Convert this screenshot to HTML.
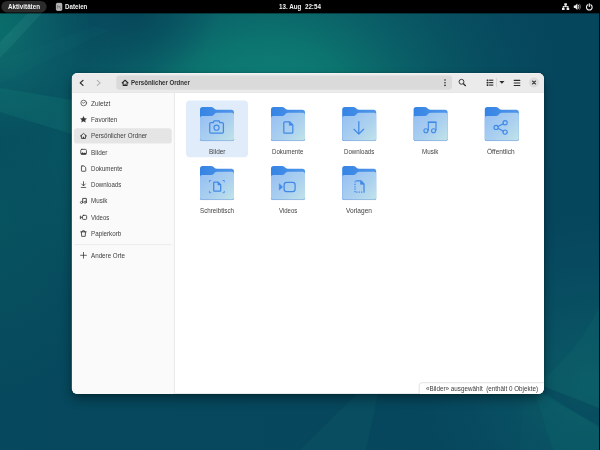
<!DOCTYPE html>
<html><head><meta charset="utf-8">
<style>
*{box-sizing:border-box;margin:0;padding:0}
html,body{width:600px;height:450px;overflow:hidden}
body{font-family:"Liberation Sans","DejaVu Sans",sans-serif;position:relative;background:#06475d;color:#333}
#gfx{position:absolute;left:0;top:0;width:600px;height:450px}
#txt{position:absolute;left:0;top:0;width:600px;height:450px;will-change:transform}
#txt span{position:absolute;white-space:nowrap;font-size:6.6px;line-height:7px;color:#424242;transform-origin:0 0}
#txt span.s{color:#404040}
#txt span.pb{font-weight:bold;color:#303030}
#txt span.st{color:#3a3a3a}
#txt span.tb{font-weight:bold;color:#f2f2f2}
</style></head><body>
<svg id="gfx" width="600" height="450" viewBox="0 0 600 450">
<defs>
<radialGradient id="g1" cx="0" cy="0" r="1" gradientUnits="userSpaceOnUse" gradientTransform="translate(270 115) scale(290 250)"><stop offset="0" stop-color="#10837a"/><stop offset="0.3" stop-color="#0d7971" stop-opacity=".9"/><stop offset="0.65" stop-color="#0b6269" stop-opacity=".5"/><stop offset="1" stop-color="#085563" stop-opacity="0"/></radialGradient>
<radialGradient id="g2" cx="0" cy="0" r="1" gradientUnits="userSpaceOnUse" gradientTransform="translate(0 30) scale(90 110)"><stop offset="0" stop-color="#10756f" stop-opacity=".9"/><stop offset="1" stop-color="#0d6c6e" stop-opacity="0"/></radialGradient>
<radialGradient id="g3" cx="590" cy="385" r="170" gradientUnits="userSpaceOnUse"><stop offset="0" stop-color="#0c6069" stop-opacity=".8"/><stop offset="1" stop-color="#0a5566" stop-opacity="0"/></radialGradient>
<radialGradient id="g4" cx="0" cy="0" r="1" gradientUnits="userSpaceOnUse" gradientTransform="translate(135 10) scale(85 70)"><stop offset="0" stop-color="#064459" stop-opacity=".85"/><stop offset="1" stop-color="#064459" stop-opacity="0"/></radialGradient>
<radialGradient id="g5" cx="0" cy="0" r="1" gradientUnits="userSpaceOnUse" gradientTransform="translate(0 215) scale(130 190)"><stop offset="0" stop-color="#085a61" stop-opacity=".6"/><stop offset="1" stop-color="#085a61" stop-opacity="0"/></radialGradient>
<linearGradient id="g0" x1="0" y1="0" x2="1" y2="0"><stop offset="0" stop-color="#06485d"/><stop offset="0.6" stop-color="#06475d"/><stop offset="1" stop-color="#06465d"/></linearGradient>
<linearGradient id="fb" x1="0" y1="0" x2="1" y2="0"><stop offset="0" stop-color="#3584e4"/><stop offset="1" stop-color="#5096ea"/></linearGradient>
<linearGradient id="ff" x1="0" y1="0.1" x2="1" y2="1"><stop offset="0" stop-color="#97c0f3"/><stop offset="0.55" stop-color="#abd0ef"/><stop offset="1" stop-color="#c1e4e8"/></linearGradient>
<filter id="sh" x="-20%" y="-20%" width="140%" height="150%"><feGaussianBlur stdDeviation="5.5"/></filter>
<filter id="sh2" x="-20%" y="-20%" width="140%" height="150%"><feGaussianBlur stdDeviation="1.5"/></filter>
<g id="folder">
<path d="M0,2.6 Q0,0 2.6,0 L11,0 Q12.6,0 13.6,1.1 L14.6,2.1 Q15.4,2.8 17,2.8 L31.4,2.8 Q34,2.8 34,5.4 L34,32 Q34,34 32,34 L2,34 Q0,34 0,32 Z" fill="url(#fb)"/>
<path d="M0,11.2 Q0,9.1 2.1,9.1 L11,9.1 Q12.8,9.1 13.8,7.8 L14.6,6.9 Q15.5,5.9 17.2,5.9 L31.9,5.9 Q34,5.9 34,8 L34,32.2 Q34,34 32.2,34 L1.8,34 Q0,34 0,32.2 Z" fill="url(#ff)"/>
<path d="M0.1,32.4 Q0.3,33.7 1.8,33.7 L32.2,33.7 Q33.7,33.7 33.9,32.4" fill="none" stroke="#6898dd" stroke-width="0.6" opacity=".85"/>
</g>
</defs>
<rect width="600" height="450" fill="url(#g0)"/>
<rect width="600" height="450" fill="url(#g1)"/>
<rect width="600" height="450" fill="url(#g4)"/>
<rect width="600" height="450" fill="url(#g5)"/>
<rect width="600" height="450" fill="url(#g2)"/>
<rect width="600" height="450" fill="url(#g3)"/>
<polygon points="0,13 28,13 0,42" fill="#046a66" opacity=".35"/><polygon points="28,13 42,13 0,58 0,42" fill="#2a8c88" opacity=".25"/>
<polygon points="0,60 0,84 110,30 95,26" fill="#1f9084" opacity=".06"/>
<polygon points="0,88 72,100 72,134 0,112" fill="#14857a" opacity=".24"/>
<polygon points="357,394 378,394 366,450 300,450" fill="#11706f" opacity=".16"/>
<path d="M544,378 Q578,350 600,306 L600,409 L544,387 Z" fill="#11706f" opacity=".20"/>
<polygon points="544,386.5 600,408.5 600,426 544,396" fill="#05445a" opacity=".40"/>
<polygon points="535,394 546,394 600,428 600,450 553,450" fill="#11706f" opacity=".26"/>
<polygon points="524,394 535,394 553,450 519,450" fill="#11706f" opacity=".10"/>
<rect x="599.2" y="13" width="1" height="437" fill="#000"/>
<!-- top bar -->
<rect x="0" y="0" width="600" height="13.35" fill="#000"/>
<rect x="1.4" y="0.9" width="45.2" height="11.6" rx="5.8" fill="#2b2b2b"/>
<rect x="56.35" y="3.3" width="5.5" height="7.1" rx="1" fill="#b2b2b2" stroke="#e4e4e4" stroke-width=".6"/><path d="M57.6,5.2 L57.6,8.6 M58.4,6.6 L60.4,6.6 M59.6,7.2 L60.8,8.9" stroke="#555" stroke-width=".7" fill="none" opacity=".8"/>
<g transform="translate(562 3.2)" fill="#f2f2f2"><rect x="2.3" y="0" width="2.6" height="2.3" rx=".3"/><rect x="0" y="4.5" width="2.6" height="2.4" rx=".3"/><rect x="4.6" y="4.5" width="2.6" height="2.4" rx=".3"/><rect x="3.15" y="2" width=".9" height="1.6"/><rect x=".85" y="3" width="5.5" height=".9"/><rect x=".85" y="3" width=".9" height="1.8"/><rect x="5.45" y="3" width=".9" height="1.8"/></g>
<g transform="translate(573.6 3.3)"><path d="M0.2,2.3 L1.6,2.3 L3.8,0.3 L3.8,6.7 L1.6,4.7 L0.2,4.7 Z" fill="#f0f0f0"/><path d="M4.9,1.9 Q5.9,3.5 4.9,5.1" fill="none" stroke="#f0f0f0" stroke-width=".9" stroke-linecap="round"/><path d="M6.2,0.9 Q7.9,3.5 6.2,6.1" fill="none" stroke="#8a8a8a" stroke-width=".8" stroke-linecap="round"/></g>
<g transform="translate(585.8 3.2)"><path d="M2.0,1.55 A2.85,2.85 0 1 0 5.0,1.55" fill="none" stroke="#f2f2f2" stroke-width="1.15" stroke-linecap="round"/><path d="M3.5,0.5 L3.5,3.3" stroke="#f2f2f2" stroke-width="1.15" stroke-linecap="round"/></g>
<!-- window shadow -->
<rect x="71.7" y="78" width="472.3" height="321" rx="7" fill="#000" opacity=".36" filter="url(#sh)"/>
<rect x="71.2" y="73.2" width="473.3" height="321.6" rx="6.2" fill="#000" opacity=".10" filter="url(#sh2)"/>
<rect x="71.2" y="72.6" width="473.3" height="321.8" rx="6.1" fill="#000" opacity=".06"/>

<clipPath id="wc"><rect x="71.7" y="73.1" width="472.30" height="320.80" rx="5.6"/></clipPath>
<g clip-path="url(#wc)">
<rect x="71.7" y="73.1" width="472.30" height="320.80" fill="#fff"/>
<rect x="71.7" y="92.2" width="102.30" height="301.70" fill="#fafafa"/>
<rect x="173.9" y="92.2" width="1" height="301.70" fill="#e9e9e9"/>
<rect x="71.7" y="73.1" width="472.30" height="19.10" fill="#ebebeb"/>
<rect x="71.7" y="73.1" width="472.30" height="0.6" fill="#f6f6f6"/>
<rect x="71.7" y="92.2" width="472.30" height="0.8" fill="#e3e3e3"/>
<path d="M419.2,394.9 L419.2,385.7 Q419.2,382.7 422.2,382.7 L545.0,382.7 L545.0,394.9 Z" fill="#fff" stroke="#d6d6d6" stroke-width=".7"/>
</g>
<rect x="116.3" y="75.6" width="335.7" height="14.1" rx="3.2" fill="#dadada"/>
<rect x="74" y="128.2" width="97.8" height="15.4" rx="3.2" fill="#e5e5e5"/>
<rect x="74.4" y="244.4" width="97.2" height=".7" fill="#e4e4e4"/>
<rect x="186" y="100.5" width="62" height="56.7" rx="4" fill="#e1ecfa"/>
<path d="M83.0,80.35 L80.2,82.85 L83.0,85.35" fill="none" stroke="#262626" stroke-width="1.25" stroke-linecap="round" stroke-linejoin="round"/>
<path d="M97.3,80.35 L100.1,82.85 L97.3,85.35" fill="none" stroke="#b2b2b2" stroke-width="1.2" stroke-linecap="round" stroke-linejoin="round"/>
<g transform="translate(121.737 79.367) scale(0.4204 0.4332)"><path d="M1,8.3 L8,2 L15,8.3 M3.4,7 L3.4,14 L12.6,14 L12.6,7" fill="none" stroke="#262626" stroke-width="2.5" stroke-linecap="round" stroke-linejoin="round"/><path d="M6.8,14 L6.8,11 Q6.8,10.2 8,10.2 Q9.2,10.2 9.2,11 L9.2,14 Z" fill="#262626" stroke="#262626" stroke-width=".6"/></g>
<circle cx="445" cy="80.0" r=".8" fill="#2a2a2a"/>
<circle cx="445" cy="82.7" r=".8" fill="#2a2a2a"/>
<circle cx="445" cy="85.4" r=".8" fill="#2a2a2a"/>
<circle cx="461.5" cy="81.8" r="2.45" fill="none" stroke="#2a2a2a" stroke-width=".9"/><path d="M463.45,83.75 L465.45,85.75" stroke="#2a2a2a" stroke-width="1.15" stroke-linecap="round"/>
<rect x="486.7" y="79.4" width="1.7" height="1.6" rx=".3" fill="#2a2a2a"/><rect x="489.1" y="79.65" width="4.2" height="1.1" fill="#2a2a2a"/>
<rect x="486.7" y="81.85" width="1.7" height="1.6" rx=".3" fill="#2a2a2a"/><rect x="489.1" y="82.10" width="4.2" height="1.1" fill="#2a2a2a"/>
<rect x="486.7" y="84.3" width="1.7" height="1.6" rx=".3" fill="#2a2a2a"/><rect x="489.1" y="84.55" width="4.2" height="1.1" fill="#2a2a2a"/>
<rect x="496.2" y="78" width=".7" height="9" fill="#cdcdcd"/>
<path d="M499.3,81.0 L504.5,81.0 L501.9,83.8 Z" fill="#2a2a2a"/>
<rect x="513.7" y="79.85" width="6.6" height="1.1" rx=".3" fill="#2a2a2a"/>
<rect x="513.7" y="82.4" width="6.6" height="1.1" rx=".3" fill="#2a2a2a"/>
<rect x="513.7" y="84.95" width="6.6" height="1.1" rx=".3" fill="#2a2a2a"/>
<circle cx="534" cy="82.5" r="5" fill="#dbdbdb"/>
<path d="M532.6,81.1 L535.4,83.9 M535.4,81.1 L532.6,83.9" stroke="#2a2a2a" stroke-width="1.15" stroke-linecap="round"/>
<g transform="translate(80.309 99.609) scale(0.4238 0.4238)"><circle cx="8" cy="8" r="6.7" fill="none" stroke="#383838" stroke-width="1.6" stroke-linecap="round" stroke-linejoin="round"/><path d="M5.4,7.2 L7.8,8.6 L10.8,5.4" fill="none" stroke="#383838" stroke-width="1.6" stroke-linecap="round" stroke-linejoin="round"/></g>
<g transform="translate(80.000 115.916) scale(0.4375 0.4211)"><path d="M8,0.2 L10.4,5.3 L16,6 L11.9,9.8 L13,15.4 L8,12.6 L3,15.4 L4.1,9.8 L0,6 L5.6,5.3 Z" fill="#383838"/></g>
<g transform="translate(79.933 132.581) scale(0.4459 0.4188)"><path d="M1,8.3 L8,2 L15,8.3 M3.4,7 L3.4,14 L12.6,14 L12.6,7" fill="none" stroke="#383838" stroke-width="2.0" stroke-linecap="round" stroke-linejoin="round"/><path d="M6.8,14 L6.8,11 Q6.8,10.2 8,10.2 Q9.2,10.2 9.2,11 L9.2,14 Z" fill="#383838" stroke="#383838" stroke-width=".6"/></g>
<g transform="translate(80.164 148.786) scale(0.4295 0.3893)"><rect x="1.4" y="1.4" width="13.2" height="13.2" rx="2.6" fill="none" stroke="#383838" stroke-width="2.0" stroke-linecap="round" stroke-linejoin="round"/><path d="M2,12.2 L5.6,9 L8.4,11.4 L11,9.4 L14,12 L14,14 L2,14 Z" fill="#383838"/></g>
<g transform="translate(80.197 165.379) scale(0.4202 0.4027)"><path d="M4.2,1.4 L9.2,1.4 L13.2,5.4 L13.2,13.4 Q13.2,14.6 12,14.6 L4.2,14.6 Q3,14.6 3,13.4 L3,2.6 Q3,1.4 4.2,1.4 Z" fill="none" stroke="#383838" stroke-width="2.0" stroke-linecap="round" stroke-linejoin="round"/></g>
<g transform="translate(80.464 181.401) scale(0.3796 0.4037)"><path d="M8,0.6 L8,10.4 M3.2,6.4 L8,11.2 L12.8,6.4 M2,15 L14,15" fill="none" stroke="#383838" stroke-width="2.0" stroke-linecap="round" stroke-linejoin="round"/></g>
<g transform="translate(79.907 197.416) scale(0.4658 0.4173)"><circle cx="3.5" cy="12" r="2.5" fill="none" stroke="#383838" stroke-width="1.6" stroke-linecap="round" stroke-linejoin="round"/><circle cx="11.3" cy="11.6" r="2.5" fill="none" stroke="#383838" stroke-width="1.6" stroke-linecap="round" stroke-linejoin="round"/><path d="M6,12 L6,2.4 L13.8,2.4 L13.8,11.6" fill="none" stroke="#383838" stroke-width="2.0" stroke-linecap="round" stroke-linejoin="round"/></g>
<g transform="translate(79.956 214.118) scale(0.4389 0.4103)"><rect x="5.8" y="3" width="9.4" height="10" rx="2.2" fill="none" stroke="#383838" stroke-width="2.0" stroke-linecap="round" stroke-linejoin="round"/><path d="M0.6,4 L4.4,8 L0.6,12 Z" fill="#383838" stroke="#383838" stroke-width="1" stroke-linejoin="round"/></g>
<g transform="translate(80.067 230.171) scale(0.4228 0.4172)"><path d="M1.4,4 L14.6,4 M5.8,3.6 L5.8,1.4 L10.2,1.4 L10.2,3.6 M3.2,4.4 L3.8,14.8 L12.2,14.8 L12.8,4.4" fill="none" stroke="#383838" stroke-width="2.0" stroke-linecap="round" stroke-linejoin="round"/></g>
<g transform="translate(80.397 252.197) scale(0.3879 0.3879)"><path d="M8,0.6 L8,15.4 M0.6,8 L15.4,8" fill="none" stroke="#383838" stroke-width="2.0" stroke-linecap="round"/></g>
<g transform="translate(200.0 106.9)"><use href="#folder"/><path d="M10.9,15.8 L13.2,15.8 L14.1,14 L19,14 L19.9,15.8 L22.2,15.8 Q23.4,15.8 23.4,17 L23.4,25.1 Q23.4,26.3 22.2,26.3 L10.9,26.3 Q9.7,26.3 9.7,25.1 L9.7,17 Q9.7,15.8 10.9,15.8 Z" fill="none" stroke="#4189e6" stroke-width="1.25" stroke-linecap="round" stroke-linejoin="round"/><circle cx="16.55" cy="20.8" r="2.55" fill="none" stroke="#4189e6" stroke-width="1.15"/></g>
<g transform="translate(271.0 106.9)"><use href="#folder"/><path d="M13.8,14.9 L18.6,14.9 L21.8,18.1 L21.8,25.3 Q21.8,26.3 20.8,26.3 L13.8,26.3 Q12.8,26.3 12.8,25.3 L12.8,15.9 Q12.8,14.9 13.8,14.9 Z" fill="none" stroke="#4189e6" stroke-width="1.25" stroke-linecap="round" stroke-linejoin="round"/><path d="M18.3,15 L18.3,18.4 L21.7,18.4 Z" fill="#4189e6" stroke="#4189e6" stroke-width=".6" stroke-linejoin="round"/></g>
<g transform="translate(342.2 106.9)"><use href="#folder"/><path d="M16.6,14.6 L16.6,27 M11.8,22.4 L16.6,27.2 L21.4,22.4" fill="none" stroke="#4189e6" stroke-width="1.25" stroke-linecap="round" stroke-linejoin="round"/></g>
<g transform="translate(413.6 106.9)"><use href="#folder"/><circle cx="12.3" cy="23.8" r="2.0" fill="none" stroke="#4189e6" stroke-width="1.1"/><circle cx="19.95" cy="23.8" r="2.0" fill="none" stroke="#4189e6" stroke-width="1.1"/><path d="M14.75,23.8 L14.75,15.5 L22.4,15.5 L22.4,23.8" fill="none" stroke="#4189e6" stroke-width="1.15" stroke-linejoin="round"/><path d="M14.7,15.45 L22.35,15.45" fill="none" stroke="#4189e6" stroke-width="1.5" stroke-linecap="round"/></g>
<g transform="translate(484.8 106.9)"><use href="#folder"/><circle cx="11.3" cy="20.5" r="2.1" fill="none" stroke="#4189e6" stroke-width="1.15"/><circle cx="20.3" cy="15.8" r="2.1" fill="none" stroke="#4189e6" stroke-width="1.15"/><circle cx="20.3" cy="25.2" r="2.1" fill="none" stroke="#4189e6" stroke-width="1.15"/><path d="M13.2,19.6 L18.5,16.8 M13.2,21.4 L18.5,24.3" fill="none" stroke="#4189e6" stroke-width="1.25" stroke-linecap="round" stroke-linejoin="round"/></g>
<g transform="translate(200.0 165.9)"><use href="#folder"/><path d="M14.4,16.2 L18.1,16.2 L20.7,18.8 L20.7,24.5 Q20.7,25.2 20,25.2 L14.4,25.2 Q13.7,25.2 13.7,24.5 L13.7,16.9 Q13.7,16.2 14.4,16.2 Z" fill="none" stroke="#4189e6" stroke-width="1.25" stroke-linecap="round" stroke-linejoin="round"/><path d="M17.9,16.3 L17.9,19 L20.6,19 Z" fill="#4189e6" stroke="#4189e6" stroke-width=".5" stroke-linejoin="round"/><path d="M9.4,16 L9.4,14.6 L10.8,14.6 M22.9,14.6 L24.3,14.6 L24.3,16 M24.3,25.4 L24.3,26.8 L22.9,26.8 M10.8,26.8 L9.4,26.8 L9.4,25.4" fill="none" stroke="#4189e6" stroke-width="1" stroke-linecap="round" stroke-linejoin="round" opacity=".8"/></g>
<g transform="translate(271.0 165.9)"><use href="#folder"/><rect x="13.1" y="16.4" width="11" height="9.2" rx="2.6" fill="none" stroke="#4189e6" stroke-width="1.25" stroke-linecap="round" stroke-linejoin="round"/><path d="M8.3,17.9 L11.6,21 L8.3,24.1 Z" fill="#4189e6" stroke="#4189e6" stroke-width=".6" stroke-linejoin="round"/></g>
<g transform="translate(342.2 165.9)"><use href="#folder"/><path d="M13.8,14.9 L18.6,14.9 L21.8,18.1 L21.8,26.3" fill="none" stroke="#4189e6" stroke-width="1.25" stroke-linecap="round" stroke-linejoin="round"/><path d="M18.3,15 L18.3,18.4 L21.7,18.4 Z" fill="#4189e6" stroke="#4189e6" stroke-width=".6" stroke-linejoin="round"/><path d="M12.8,15.5 L12.8,26.3 L21.2,26.3" fill="none" stroke="#4189e6" stroke-width="1.25" stroke-dasharray="1.2 1.2"/></g>
</svg>
<div id="txt">
<span class="s" style="left:90.60px;top:100px;transform:scaleX(0.9798)">Zuletzt</span>
<span class="s" style="left:90.60px;top:116px;transform:scaleX(0.9594)">Favoriten</span>
<span class="s" style="left:90.60px;top:132px;transform:scaleX(0.9527)">Persönlicher Ordner</span>
<span class="s" style="left:90.60px;top:149px;transform:scaleX(0.973)">Bilder</span>
<span class="s" style="left:90.60px;top:165px;transform:scaleX(0.9316)">Dokumente</span>
<span class="s" style="left:90.60px;top:181px;transform:scaleX(0.9267)">Downloads</span>
<span class="s" style="left:90.60px;top:197px;transform:scaleX(0.9443)">Musik</span>
<span class="s" style="left:90.60px;top:214px;transform:scaleX(0.9152)">Videos</span>
<span class="s" style="left:90.60px;top:230px;transform:scaleX(0.9503)">Papierkorb</span>
<span class="s" style="left:90.60px;top:252px;transform:scaleX(0.9459)">Andere Orte</span>
<span class="" style="left:208.50px;top:148px;transform:scaleX(0.973)">Bilder</span>
<span class="" style="left:272.05px;top:148px;transform:scaleX(0.9316)">Dokumente</span>
<span class="" style="left:343.65px;top:148px;transform:scaleX(0.9267)">Downloads</span>
<span class="" style="left:422.05px;top:148px;transform:scaleX(0.9443)">Musik</span>
<span class="" style="left:487.40px;top:148px;transform:scaleX(0.9957)">Öffentlich</span>
<span class="" style="left:200.00px;top:207px;transform:scaleX(0.9459)">Schreibtisch</span>
<span class="" style="left:278.60px;top:207px;transform:scaleX(0.9152)">Videos</span>
<span class="" style="left:346.00px;top:207px;transform:scaleX(0.9963)">Vorlagen</span>
<span class="pb" style="left:131.00px;top:79px;transform:scaleX(0.9222)">Persönlicher Ordner</span>
<span class="st" style="left:425.60px;top:385px;transform:scaleX(0.955)">«Bilder» ausgewählt&nbsp; (enthält 0 Objekte)</span>
<span class="tb" style="left:8.00px;top:3px;transform:scaleX(0.9493)">Aktivitäten</span>
<span class="tb" style="left:65.30px;top:3px;transform:scaleX(0.9387)">Dateien</span>
<span class="tb" style="left:279.20px;top:3px;transform:scaleX(0.9509)">13. Aug&nbsp; 22:54</span>
</div>
</body></html>
